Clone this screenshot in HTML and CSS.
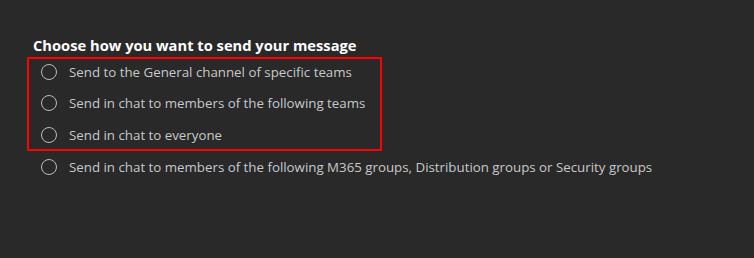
FILE: index.html
```html
<!DOCTYPE html>
<html>
<head>
<meta charset="utf-8">
<link rel="stylesheet" href="styles.css">
</head>
<body>
<div class="panel">
  <div class="title">Choose how you want to send your message</div>
  <div class="highlight">
    <label class="option"><span class="radio"></span><span class="label">Send to the General channel of specific teams</span></label>
    <label class="option"><span class="radio"></span><span class="label">Send in chat to members of the following teams</span></label>
    <label class="option"><span class="radio"></span><span class="label">Send in chat to everyone</span></label>
  </div>
  <div class="rest">
    <label class="option"><span class="radio"></span><span class="label">Send in chat to members of the following M365 groups, Distribution groups or Security groups</span></label>
  </div>
</div>
</body>
</html>
```
FILE: styles.css
```css
html, body {
  margin: 0;
  padding: 0;
  background: #292929;
  width: 754px;
  height: 258px;
  overflow: hidden;
}
.panel {
  padding: 34px 0 0 27px;
  font-family: "Open Sans", "Noto Sans", sans-serif;
}
.title {
  color: #ffffff;
  font-weight: 700;
  font-size: 14.7px;
  line-height: 22px;
  margin-left: 6px;
  height: 23px;
}
.highlight {
  width: 355px;
  height: 94px;
  border: 2px solid #ff0000;
  padding: 0;
  box-sizing: border-box;
  display: flex;
  flex-direction: column;
  gap: 6.7px;
}
.rest {
  padding-top: 3.2px;
}
.option {
  display: flex;
  align-items: center;
  height: 25px;
  padding-left: 12px;
}
.rest .option {
  padding-left: 14px;
}
.radio {
  width: 14px;
  height: 14px;
  border: 1px solid #bcbcbc;
  border-radius: 50%;
  flex: none;
}
.label {
  margin-left: 12px;
  color: #c8c8c8;
  font-size: 13.3px;
  white-space: nowrap;
}
```
